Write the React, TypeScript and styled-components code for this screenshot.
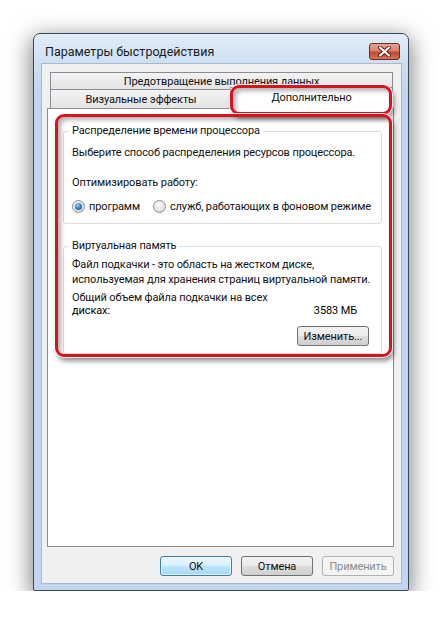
import React from "react";
import styled, { createGlobalStyle } from "styled-components";

const GlobalStyle = createGlobalStyle`
  body {
    margin: 0;
    background: #fff;
    font-family: Roboto, "Noto Sans", sans-serif;
    font-size: 11px;
    letter-spacing: -0.12px;
    color: #000;
  }
`;

const Page = styled.div`
  padding: 33px 0 0 33px;
`;

const Window = styled.div`
  width: 376px;
  height: 558px;
  box-sizing: border-box;
  border: 1px solid #39485a;
  border-radius: 7px 7px 2px 2px;
  background: linear-gradient(#e2ecf8 0px, #cddff2 30px, #c1d5ee 60px, #c1d5ee);
  box-shadow: 0 6px 22px 2px rgba(0, 0, 0, 0.5);
  display: flex;
  flex-direction: column;
`;

const TitleBar = styled.div`
  height: 29px;
  box-sizing: border-box;
  padding: 5px 8px 0 11px;
  display: flex;
  align-items: center;
  justify-content: space-between;
`;

const Title = styled.div`
  font-size: 12.5px;
  letter-spacing: 0;
  color: #1a1a1a;
`;

const CloseButton = styled.div`
  width: 31px;
  height: 17px;
  box-sizing: border-box;
  border: 1px solid #6e2a22;
  border-radius: 3px;
  background: linear-gradient(#e8a493 0%, #d9826d 45%, #c4462e 55%, #d2735b 100%);
  display: flex;
  align-items: center;
  justify-content: center;
`;

const Client = styled.div`
  flex: 1;
  margin: 0 6px 6px 7px;
  border: 1px solid #a9b9cc;
  background: #f0f0f0;
  padding: 8px 7px 7px 5px;
  display: flex;
  flex-direction: column;
  white-space: nowrap;
`;

const TabRow = styled.div<{ $height: number }>`
  display: flex;
  height: ${({ $height }) => $height}px;
  padding: 0 1px 0 3px;
`;

const Tab = styled.div<{ $width?: number; $selected?: boolean }>`
  position: relative;
  box-sizing: border-box;
  ${({ $width }) => ($width ? `width: ${$width}px;` : "flex: 1;")}
  border: 1px solid #898c95;
  border-bottom: none;
  background: linear-gradient(#f3f3f3, #e4e4e4);
  display: flex;
  align-items: center;
  justify-content: center;
  color: #111;
  ${({ $selected }) =>
    $selected &&
    `
    background: #fff;
    margin: -2px 0 -1px -2px;
    z-index: 2;
    padding-bottom: 2px;
  `}
`;

const Highlight = styled.div<{ $top: number; $left: number; $width: number; $height: number }>`
  position: absolute;
  top: ${({ $top }) => $top}px;
  left: ${({ $left }) => $left}px;
  width: ${({ $width }) => $width}px;
  height: ${({ $height }) => $height}px;
  box-sizing: border-box;
  border: 3px solid #d9121e;
  border-radius: 9px;
  box-shadow: 0 0 0 1px rgba(255, 255, 255, 0.9), 2px 4px 5px rgba(0, 0, 0, 0.45),
    inset 3px 3px 4px rgba(0, 0, 0, 0.3);
  pointer-events: none;
  z-index: 5;
`;

const Panel = styled.div`
  position: relative;
  flex: 1;
  border: 1px solid #898c95;
  background: #fff;
  padding: 15px 11px 0 15px;
  display: flex;
  flex-direction: column;
  gap: 15px;
`;

const GroupBox = styled.fieldset`
  margin: 0;
  border: 1px solid #d5dfe5;
  border-radius: 3px;
  padding: 0 12px 0 8px;
  display: flex;
  flex-direction: column;
  min-width: 0;
`;

const Legend = styled.legend`
  padding: 0 3px;
  margin-left: -3px;
  line-height: 14px;
  color: #111;
`;

const Text = styled.div<{ $mt?: number; $lh?: number }>`
  margin-top: ${({ $mt }) => $mt ?? 0}px;
  line-height: ${({ $lh }) => $lh ?? 15}px;
  color: #111;
`;

const RadioRow = styled.div`
  margin-top: 9px;
  margin-bottom: 9px;
  display: flex;
  align-items: center;
  line-height: 15px;
`;

const RadioOption = styled.label`
  display: flex;
  align-items: center;
  gap: 4px;
  margin-right: 13px;
  color: #111;
`;

const RadioCircle = styled.span<{ $checked?: boolean }>`
  width: 13px;
  height: 13px;
  box-sizing: border-box;
  border-radius: 50%;
  border: 1px solid #8e8f8f;
  background: radial-gradient(circle at 40% 35%, #fbfbfb, #dcdcdc 70%, #cfcfcf);
  display: flex;
  align-items: center;
  justify-content: center;

  &::after {
    content: "";
    display: ${({ $checked }) => ($checked ? "block" : "none")};
    width: 7px;
    height: 7px;
    border-radius: 50%;
    background: radial-gradient(circle at 40% 35%, #8fd0f5, #1f72bb 60%, #0d4f8f);
  }
`;

const ValueRow = styled.div`
  display: flex;
  justify-content: space-between;
  padding-right: 12px;
  line-height: 13px;
`;

const ButtonRow = styled.div<{ $mt: number; $mb?: number }>`
  display: flex;
  justify-content: flex-end;
  gap: 9px;
  margin-top: ${({ $mt }) => $mt}px;
  margin-bottom: ${({ $mb }) => $mb ?? 0}px;
`;

const Button = styled.div<{ $variant?: "default" | "disabled" }>`
  width: 72px;
  height: 20px;
  box-sizing: border-box;
  border-radius: 3px;
  display: flex;
  align-items: center;
  justify-content: center;
  border: 1px solid #707070;
  color: #111;
  background: linear-gradient(#f2f2f2 0%, #ebebeb 48%, #dddddd 52%, #cfcfcf 100%);
  ${({ $variant }) =>
    $variant === "default" &&
    `
    border-color: #3c7fb1;
    background: linear-gradient(#eaf6fd 0%, #d9f0fc 48%, #bee6fd 52%, #a7d9f5 100%);
    box-shadow: inset 0 0 0 1px rgba(255,255,255,0.6);
  `}
  ${({ $variant }) =>
    $variant === "disabled" &&
    `
    border-color: #adb2b5;
    background: #f4f4f4;
    color: #8a8a8a;
  `}
`;

const CloseGlyph = () => (
  <svg width="13" height="11" viewBox="0 0 13 11">
    <path d="M2 1.5 L11 9.5 M11 1.5 L2 9.5" stroke="#5a1a12" strokeWidth="4" strokeLinecap="round" />
    <path d="M2 1.5 L11 9.5 M11 1.5 L2 9.5" stroke="#fff" strokeWidth="2.2" strokeLinecap="round" />
  </svg>
);

export default function App() {
  return (
    <>
      <GlobalStyle />
      <Page>
        <Window>
          <TitleBar>
            <Title>Параметры быстродействия</Title>
            <CloseButton>
              <CloseGlyph />
            </CloseButton>
          </TitleBar>
          <Client>
            <TabRow $height={17}>
              <Tab>Предотвращение выполнения данных</Tab>
            </TabRow>
            <TabRow $height={19}>
              <Tab $width={182}>Визуальные эффекты</Tab>
              <Tab $selected>
                Дополнительно
                <Highlight $top={-3} $left={-1} $width={162} $height={30} />
              </Tab>
            </TabRow>
            <Panel>
              <Highlight $top={5} $left={7} $width={337} $height={243} />
              <GroupBox>
                <Legend>Распределение времени процессора</Legend>
                <Text $mt={7}>Выберите способ распределения ресурсов процессора.</Text>
                <Text $mt={15}>Оптимизировать работу:</Text>
                <RadioRow>
                  <RadioOption>
                    <RadioCircle $checked />
                    программ
                  </RadioOption>
                  <RadioOption>
                    <RadioCircle />
                    служб, работающих в фоновом режиме
                  </RadioOption>
                </RadioRow>
              </GroupBox>
              <GroupBox>
                <Legend>Виртуальная память</Legend>
                <Text $mt={4}>
                  Файл подкачки - это область на жестком диске,
                  <br />
                  используемая для хранения страниц виртуальной памяти.
                </Text>
                <Text $mt={4} $lh={13}>
                  Общий объем файла подкачки на всех
                </Text>
                <ValueRow>
                  <span>дисках:</span>
                  <span>3583 МБ</span>
                </ValueRow>
                <ButtonRow $mt={9} $mb={7}>
                  <Button>Изменить...</Button>
                </ButtonRow>
              </GroupBox>
            </Panel>
            <ButtonRow $mt={9}>
              <Button $variant="default">OK</Button>
              <Button>Отмена</Button>
              <Button $variant="disabled">Применить</Button>
            </ButtonRow>
          </Client>
        </Window>
      </Page>
    </>
  );
}
